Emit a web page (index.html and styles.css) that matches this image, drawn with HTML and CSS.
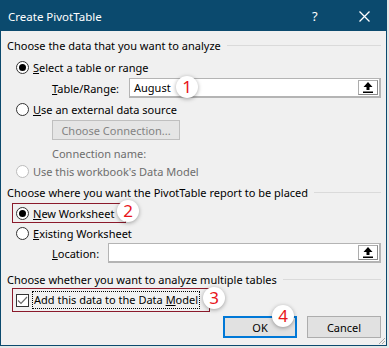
FILE: index.html
```html
<!DOCTYPE html>
<html lang="en">

<head>
    <link rel="stylesheet" href="styles.css">
    <title>Create PivotTable</title>
</head>

<body>
    <div class="window">
        <div class="titlebar">
            <span class="title">Create PivotTable</span>
            <span class="help">?</span>
            <span class="close">
                <svg width="11" height="11" viewBox="0 0 11 11">
                    <path d="M0.5 0.5 L10.5 10.5 M10.5 0.5 L0.5 10.5" stroke="#fff" stroke-width="1.3" fill="none" />
                </svg>
            </span>
        </div>

        <div class="content">
            <div class="group-title t1"><span>Choose the data that you want to analyze</span></div>

            <div class="option o1">
                <span class="radio checked"></span>
                <span><u>S</u>elect a table or range</span>
            </div>

            <div class="field f1">
                <span class="field-label range-label"><u>T</u>able/Range:</span>
                <div class="input">
                    <span class="value">August</span>
                    <span class="picker">
                        <svg width="10" height="11" viewBox="0 0 10 11">
                            <path d="M5 0 L9.5 5 L6.5 5 L6.5 8 L3.5 8 L3.5 5 L0.5 5 Z" fill="#000" />
                            <rect x="0" y="9.5" width="10" height="1.5" fill="#000" />
                        </svg>
                    </span>
                </div>
            </div>

            <div class="option o2">
                <span class="radio"></span>
                <span><u>U</u>se an external data source</span>
            </div>

            <div class="conn-row">
                <span class="btn disabled">Choose Connection...</span>
            </div>

            <div class="conn-name">Connection name:</div>

            <div class="option o3 disabled">
                <span class="radio"></span>
                <span>Use this workbook's Data Model</span>
            </div>

            <div class="group-title t2"><span>Choose where you want the PivotTable report to be placed</span></div>

            <div class="mark-row m1">
                <div class="marked">
                    <span class="radio checked"></span>
                    <span><u>N</u>ew Worksheet</span>
                </div>
            </div>

            <div class="option o4">
                <span class="radio"></span>
                <span><u>E</u>xisting Worksheet</span>
            </div>

            <div class="field f2">
                <span class="field-label loc-label"><u>L</u>ocation:</span>
                <div class="input">
                    <span class="value"></span>
                    <span class="picker">
                        <svg width="10" height="11" viewBox="0 0 10 11">
                            <path d="M5 0 L9.5 5 L6.5 5 L6.5 8 L3.5 8 L3.5 5 L0.5 5 Z" fill="#000" />
                            <rect x="0" y="9.5" width="10" height="1.5" fill="#000" />
                        </svg>
                    </span>
                </div>
            </div>

            <div class="group-title t3"><span>Choose whether you want to analyze multiple tables</span></div>

            <div class="mark-row m2">
                <div class="marked">
                    <span class="checkbox">
                        <svg width="11" height="11" viewBox="0 0 11 11">
                            <path d="M1 5.5 L4 8.5 L10 2" stroke="#6b6b6b" stroke-width="1.2" fill="none" />
                        </svg>
                    </span>
                    <span class="focus">Add this data to the Data <u>M</u>odel</span>
                </div>
            </div>

            <div class="buttons">
                <span class="btn default">OK</span>
                <span class="btn">Cancel</span>
            </div>
        </div>

        <span class="badge b1">1</span>
        <span class="badge b2">2</span>
        <span class="badge b3">3</span>
        <span class="badge b4">4</span>

        <svg class="grip" width="8" height="8" viewBox="0 0 8 8">
            <path d="M7 1 L1 7 M7 4 L4 7" stroke="#a8a8a8" stroke-width="1" fill="none" />
        </svg>
    </div>
</body>

</html>
```

FILE: styles.css
```css
* {
    margin: 0;
    padding: 0;
    box-sizing: border-box;
}

body {
    background-color: #e6e6e6;
    font-family: 'Noto Sans', sans-serif;
    font-size: 11px;
    color: #000;
}

.window {
    position: relative;
    width: 387px;
    height: 346px;
    background-color: #f0f0f0;
    border: 1px solid #0b4a6e;
    border-top: 0;
}

.titlebar {
    height: 31px;
    background-color: #0b4a6e;
    color: #fff;
    display: flex;
    align-items: center;
    padding-left: 8px;
    margin: 0 -1px;
}

.title {
    flex: 1;
    font-size: 11.5px;
    padding-top: 1px;
}

.help {
    width: 14px;
    margin-right: 33px;
    font-size: 13px;
}

.close {
    width: 28px;
    display: flex;
    padding-top: 1px;
}

.content {
    padding: 6px 5px 0 6px;
}

.group-title {
    height: 16px;
    display: flex;
    align-items: center;
    white-space: nowrap;
}

.group-title::after {
    content: "";
    flex: 1;
    height: 1px;
    background-color: #dadada;
    margin-left: 6px;
}

.t2 {
    margin-top: 5px;
}

.t3 {
    margin-top: 8px;
}

.option {
    height: 16px;
    display: flex;
    align-items: center;
    gap: 4px;
    padding-left: 9px;
}

.o1 {
    margin-top: 6px;
}

.o2 {
    margin-top: 3px;
}

.o3 {
    margin-top: 1px;
}

.o4 {
    margin-top: 2px;
}

.disabled {
    color: #6d6d6d;
}

.radio {
    width: 13px;
    height: 13px;
    border: 1px solid #333;
    border-radius: 50%;
    background-color: #fff;
    display: flex;
    align-items: center;
    justify-content: center;
}

.radio.checked::after {
    content: "";
    width: 7px;
    height: 7px;
    border-radius: 50%;
    background-color: #000;
}

.option.disabled .radio {
    border-color: #bcbcbc;
}

.field {
    display: flex;
    align-items: center;
    padding-left: 45px;
    height: 20px;
}

.f1 {
    margin-top: 3px;
}

.f2 {
    margin-top: 2px;
}

.range-label {
    width: 77px;
}

.loc-label {
    width: 56px;
}

.input {
    flex: 1;
    height: 20px;
    background-color: #fff;
    border: 2px solid #b4b4b4;
    border-top-width: 1px;
    border-left-width: 1px;
    display: flex;
    align-items: center;
    padding: 0 1px 0 4px;
}

.value {
    flex: 1;
}

.picker {
    width: 20px;
    height: 15px;
    background-color: #fff;
    border: 1px solid #adadad;
    border-right-color: #8a8a8a;
    border-bottom-color: #8a8a8a;
    display: flex;
    align-items: center;
    justify-content: center;
}

.conn-row {
    margin-top: 3px;
    padding-left: 45px;
}

.btn {
    display: inline-flex;
    align-items: center;
    justify-content: center;
    height: 20px;
    background-color: #e1e1e1;
    border: 1px solid #adadad;
}

.conn-row .btn {
    width: 128px;
    background-color: #e5e5e5;
    border-color: #bfbfbf;
    color: #838383;
}

.conn-name {
    margin-top: 6px;
    height: 16px;
    line-height: 16px;
    padding-left: 45px;
    color: #6d6d6d;
}

.mark-row {
    display: flex;
    padding-left: 5px;
}

.m1 {
    margin-top: 3px;
}

.m2 {
    margin-top: 1px;
}

.marked {
    display: flex;
    align-items: center;
    gap: 4px;
    border: 1px solid #8b1a2b;
    padding-left: 3px;
    white-space: nowrap;
}

.m1 .marked {
    height: 20px;
    width: 114px;
}

.m2 .marked {
    height: 24px;
    width: 198px;
}

.checkbox {
    width: 13px;
    height: 13px;
    border: 1px solid #333;
    background-color: #fff;
    display: flex;
    align-items: center;
    justify-content: center;
}

.focus {
    outline: 1px dotted #000;
    padding: 0 1px;
    line-height: 16px;
}

.buttons {
    display: flex;
    justify-content: flex-end;
    gap: 10px;
    margin-top: 4px;
}

.buttons .btn {
    width: 74px;
    height: 22px;
}

.btn.default {
    border: 2px solid #0078d7;
}

.badge {
    position: absolute;
    width: 22px;
    height: 22px;
    border-radius: 50%;
    background-color: #fff;
    box-shadow: 0 1px 4px rgba(0, 0, 0, 0.35);
    color: #e8151b;
    font-size: 17px;
    line-height: 22px;
    text-align: center;
}

.b1 {
    left: 175px;
    top: 76px;
}

.b2 {
    left: 116px;
    top: 200px;
}

.b3 {
    left: 202px;
    top: 287px;
}

.b4 {
    left: 271px;
    top: 305px;
}

.grip {
    position: absolute;
    right: 0;
    bottom: 0;
}
```
